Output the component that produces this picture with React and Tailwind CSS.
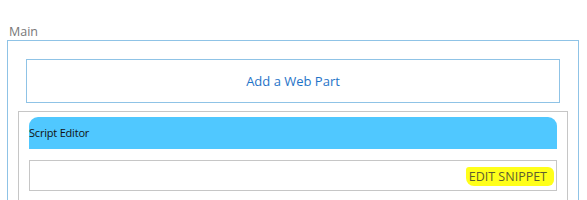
import React from 'react';

const font = { fontFamily: '"Open Sans", "Noto Sans", "Liberation Sans", sans-serif' };

export default function App() {
  return (
    <div className="w-[587px] h-[200px] overflow-hidden bg-white" style={font}>
      <div className="pt-[25px] pl-[9px] text-[12.5px] leading-[14px] text-[#777777]">Main</div>
      <div className="ml-[7px] mt-[1px] w-[572px] h-[200px] border border-[#8fc3e6] px-[10px] pt-[18px]">
        <div className="mx-[8px] h-[44px] border border-[#8fc3e6] flex items-center justify-center">
          <span className="text-[13px] text-[#1f74c8] pt-[2px]">Add a Web Part</span>
        </div>
        <div className="mt-[8px] h-[100px] border border-[#c6c6c6] px-[10px] pt-[5px]">
          <div className="h-[32px] bg-[#50c8ff] rounded-t-[9px] flex items-center">
            <span className="text-[11px] text-[#111111] tracking-[-0.2px]">Script Editor</span>
          </div>
          <div className="mt-[11px] h-[31px] border border-[#c6c6c6] flex items-center justify-end pr-[9px] pt-[2px]">
            <span className="relative text-[12.5px] text-[#5e5e30] leading-[16px]">
              <span className="absolute -left-[3px] -right-[7px] -top-[2px] -bottom-[1px] bg-[#ffff1a] rounded-[3px_6px_6px_8px]" />
              <span className="relative">EDIT SNIPPET</span>
            </span>
          </div>
        </div>
      </div>
    </div>
  );
}
